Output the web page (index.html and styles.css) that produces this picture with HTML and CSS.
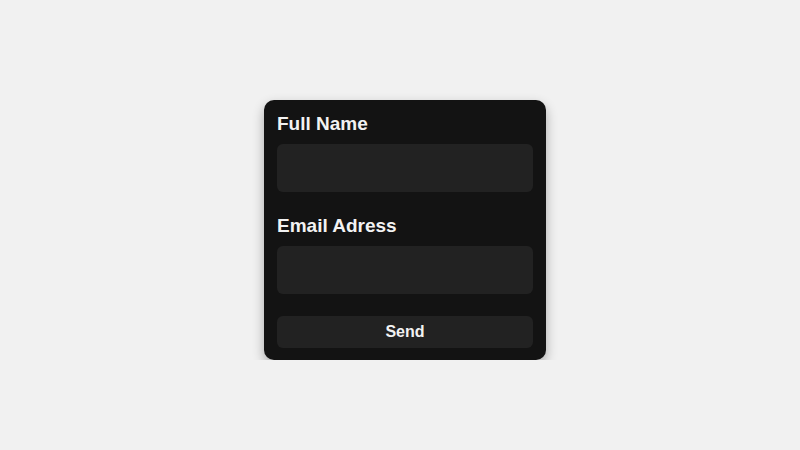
FILE: index.html
```html
<!DOCTYPE html>
<html>
<head>
    <title>Contact</title>
    <link rel="stylesheet" href="styles.css">
</head>
<body>
    <form class="card" onsubmit="return false;">
        <label class="label" for="name">Full Name</label>
        <input class="field" type="text" id="name" name="name">
        <label class="label" for="email">Email Adress</label>
        <input class="field" type="email" id="email" name="email">
        <button class="send" type="submit">Send</button>
    </form>
</body>
</html>
```

FILE: styles.css
```css
body {
    margin: 0;
    padding: 100px 0 0 264px;
    background-color: #f1f1f1;
    font-family: "Liberation Sans", Arial, sans-serif;
}
.card {
    display: flex;
    flex-direction: column;
    width: 256px;
    padding: 12px 13px;
    background: #131313; /* near-black panel */
    border-radius: 10px;
    box-shadow: 0 5px 12px rgba(0, 0, 0, 0.3);
}
.label {
    color: #f2f2f2;
    font-size: 19px;
    font-weight: bold;
    line-height: 23px;
    margin-bottom: 9px;
}
.field {
    height: 48px;
    margin: 0 0 22px;
    padding: 0 12px;
    box-sizing: border-box;
    border: none;
    border-radius: 6px;
    background: #222222;
    color: #f2f2f2;
    font-size: 16px;
    outline: none;
}
.send {
    height: 32px;
    border: none;
    border-radius: 6px;
    background: #222222;
    color: #f2f2f2;
    font-family: inherit;
    font-size: 16px;
    font-weight: bold;
    cursor: pointer;
}
```
